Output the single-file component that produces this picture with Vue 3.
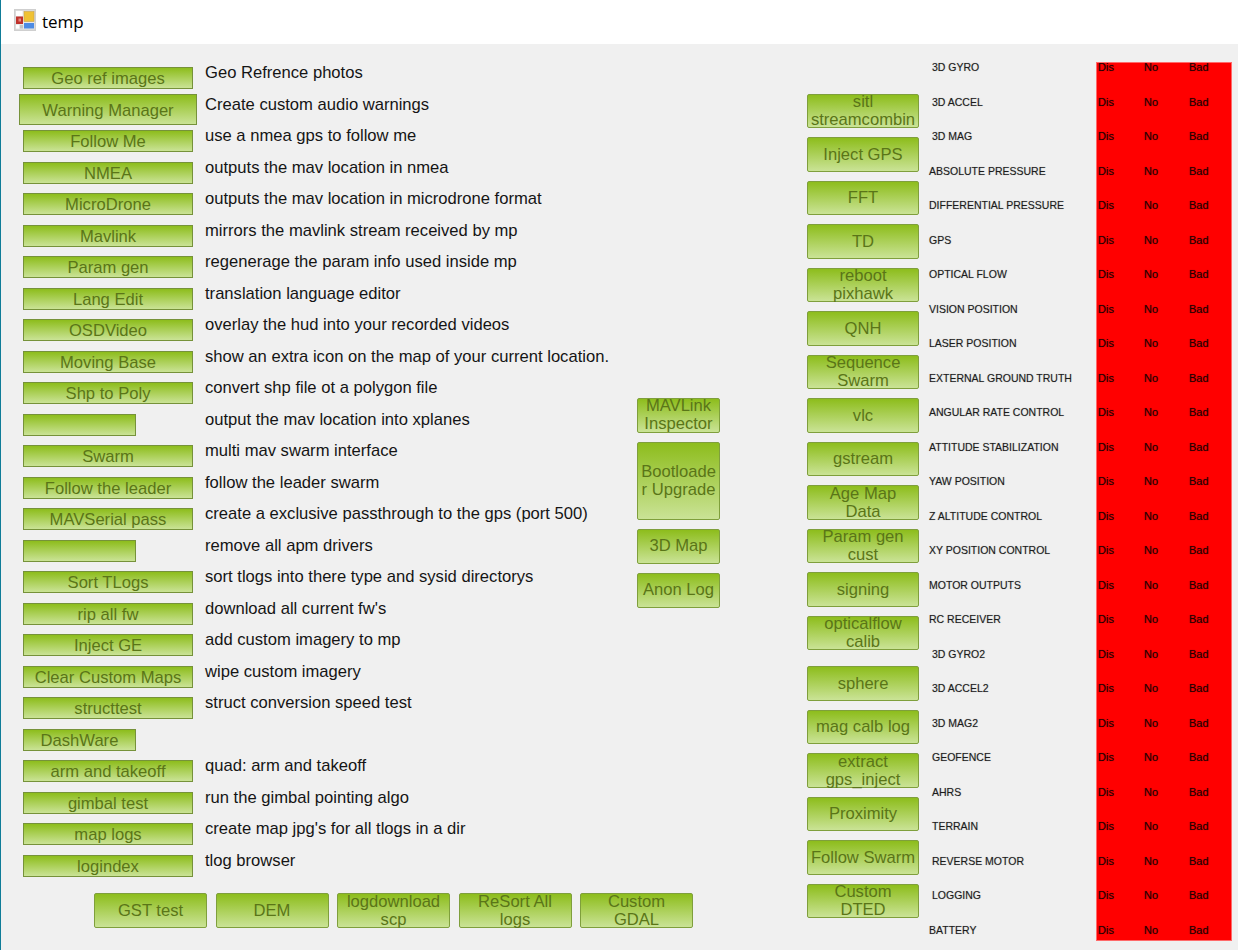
<script setup>
const tools = [
  { name: 'Geo ref images', text: 'Geo Refrence photos' },
  { name: 'Warning Manager', text: 'Create custom audio warnings', big: true },
  { name: 'Follow Me', text: 'use a nmea gps to follow me' },
  { name: 'NMEA', text: 'outputs the mav location in nmea' },
  { name: 'MicroDrone', text: 'outputs the mav location in microdrone format' },
  { name: 'Mavlink', text: 'mirrors the mavlink stream received by mp' },
  { name: 'Param gen', text: 'regenerage the param info used inside mp' },
  { name: 'Lang Edit', text: 'translation language editor' },
  { name: 'OSDVideo', text: 'overlay the hud into your recorded videos' },
  { name: 'Moving Base', text: 'show an extra icon on the map of your current location.' },
  { name: 'Shp to Poly', text: 'convert shp file ot a polygon file' },
  { name: '', text: 'output the mav location into xplanes', small: true },
  { name: 'Swarm', text: 'multi mav swarm interface' },
  { name: 'Follow the leader', text: 'follow the leader swarm' },
  { name: 'MAVSerial pass', text: 'create a exclusive passthrough to the gps (port 500)' },
  { name: '', text: 'remove all apm drivers', small: true },
  { name: 'Sort TLogs', text: 'sort tlogs into there type and sysid directorys' },
  { name: 'rip all fw', text: "download all current fw's" },
  { name: 'Inject GE', text: 'add custom imagery to mp' },
  { name: 'Clear Custom Maps', text: 'wipe custom imagery' },
  { name: 'structtest', text: 'struct conversion speed test' },
  { name: 'DashWare', text: '', small: true },
  { name: 'arm and takeoff', text: 'quad: arm and takeoff' },
  { name: 'gimbal test', text: 'run the gimbal pointing algo' },
  { name: 'map logs', text: "create map jpg's for all tlogs in a dir" },
  { name: 'logindex', text: 'tlog browser' }
]

const bottomButtons = ['GST test', 'DEM', 'logdownload\nscp', 'ReSort All\nlogs', 'Custom\nGDAL']

const middleButtons = [
  { name: 'MAVLink\nInspector' },
  { name: 'Bootloade\nr Upgrade', tall: true },
  { name: '3D Map' },
  { name: 'Anon Log' }
]

const rightButtons = [
  'sitl\nstreamcombin', 'Inject GPS', 'FFT', 'TD', 'reboot\npixhawk', 'QNH', 'Sequence\nSwarm',
  'vlc', 'gstream', 'Age Map\nData', 'Param gen\ncust', 'signing', 'opticalflow\ncalib',
  'sphere', 'mag calb log', 'extract\ngps_inject', 'Proximity', 'Follow Swarm', 'Custom\nDTED'
]

const sensors = [
  { name: '3D GYRO', inset: true },
  { name: '3D ACCEL', inset: true },
  { name: '3D MAG', inset: true },
  { name: 'ABSOLUTE PRESSURE' },
  { name: 'DIFFERENTIAL PRESSURE' },
  { name: 'GPS' },
  { name: 'OPTICAL FLOW' },
  { name: 'VISION POSITION' },
  { name: 'LASER POSITION' },
  { name: 'EXTERNAL GROUND TRUTH' },
  { name: 'ANGULAR RATE CONTROL' },
  { name: 'ATTITUDE STABILIZATION' },
  { name: 'YAW POSITION' },
  { name: 'Z ALTITUDE CONTROL' },
  { name: 'XY POSITION CONTROL' },
  { name: 'MOTOR OUTPUTS' },
  { name: 'RC RECEIVER' },
  { name: '3D GYRO2', inset: true },
  { name: '3D ACCEL2', inset: true },
  { name: '3D MAG2', inset: true },
  { name: 'GEOFENCE', inset: true },
  { name: 'AHRS', inset: true },
  { name: 'TERRAIN', inset: true },
  { name: 'REVERSE MOTOR', inset: true },
  { name: 'LOGGING', inset: true },
  { name: 'BATTERY' }
]
</script>

<template>
  <div class="window">
    <header class="titlebar">
      <svg class="app-icon" width="22" height="22" viewBox="0 0 22 22">
        <rect x="0" y="0" width="22" height="22" fill="#cfcfcf" />
        <rect x="1.5" y="1.5" width="19" height="19" fill="#e8e8e8" />
        <rect x="2" y="2" width="6.5" height="5" fill="#fff" />
        <rect x="2" y="7.5" width="7" height="7.5" fill="#c0322c" />
        <rect x="4.5" y="9.5" width="2.5" height="3" fill="#e58a80" />
        <rect x="10" y="2.5" width="10" height="10" fill="#f0c234" stroke="#c9a24a" stroke-width="0.6" />
        <rect x="10" y="14" width="10" height="5.5" fill="#4d8be4" />
        <rect x="2" y="16" width="3" height="3.5" fill="#fff" />
        <rect x="6" y="16" width="3" height="3.5" fill="#c4c4c4" />
      </svg>
      <span class="title">temp</span>
    </header>

    <main class="content">
      <section class="tools">
        <div v-for="(tool, i) in tools" :key="i" class="tool-row">
          <div class="tool-cell">
            <button
              type="button"
              class="btn flat"
              :class="{ big: tool.big, small: tool.small }"
            >{{ tool.name }}</button>
          </div>
          <span class="tool-text">{{ tool.text }}</span>
        </div>
        <div class="bottom-row">
          <button v-for="b in bottomButtons" :key="b" type="button" class="btn">{{ b }}</button>
        </div>
      </section>

      <section class="middle">
        <button
          v-for="b in middleButtons"
          :key="b.name"
          type="button"
          class="btn"
          :class="{ tall: b.tall }"
        >{{ b.name }}</button>
      </section>

      <section class="right-buttons">
        <button
          v-for="b in rightButtons"
          :key="b"
          type="button"
          class="btn"
          :class="{ 'after-gap': b === 'sphere' }"
        >{{ b }}</button>
      </section>

      <section class="sensors">
        <div class="sensor-names">
          <div
            v-for="s in sensors"
            :key="s.name"
            class="sensor-name"
            :class="{ inset: s.inset }"
          >{{ s.name }}</div>
        </div>
        <div class="sensor-status">
          <div v-for="s in sensors" :key="s.name" class="status-row">
            <span>Dis</span>
            <span>No</span>
            <span>Bad</span>
          </div>
        </div>
      </section>
    </main>
  </div>
</template>

<style scoped>
.window {
  width: 1238px;
  height: 950px;
  box-sizing: border-box;
  border-left: 1px solid #0f7c98;
  background: #f0f0f0;
  font-family: "Liberation Sans", Arial, sans-serif;
  overflow: hidden;
}

.titlebar {
  height: 44px;
  background: #fff;
  display: flex;
  align-items: center;
  gap: 6px;
  padding-left: 13px;
}
.app-icon {
  flex: none;
  margin-top: -4px;
}
.title {
  font-family: "Open Sans", sans-serif;
  font-size: 17px;
  color: #000;
  margin-top: -1px;
}

.content {
  display: flex;
  align-items: flex-start;
}

.btn {
  display: flex;
  align-items: center;
  justify-content: center;
  box-sizing: border-box;
  padding: 0;
  border: 1px solid #7f9f3c;
  border-radius: 2px;
  background: linear-gradient(#8dbd1c, #cae396);
  color: #5a7518;
  font-family: inherit;
  font-size: 16.6px;
  line-height: 18px;
  text-align: center;
  white-space: pre-line;
  flex: none;
}
.btn.flat {
  width: 170px;
  height: 22px;
  padding-top: 2px;
  border-color: #76923a;
  border-radius: 0;
}
.btn.flat.big {
  width: 178px;
  height: 31px;
  margin: 0 -4px;
}
.btn.flat.small {
  width: 113px;
}

.tools {
  width: 614px;
  flex: none;
  margin-left: 22px;
  padding-top: 18.25px;
}
.tool-row {
  height: 31.5px;
  display: flex;
  align-items: center;
}
.tool-cell {
  width: 182px;
  flex: none;
}
.tool-text {
  margin-bottom: 10px;
  font-size: 16.6px;
  color: #151515;
  white-space: nowrap;
}
.bottom-row {
  display: flex;
  gap: 8.5px;
  margin-top: 11.75px;
  padding-left: 71px;
}
.bottom-row .btn {
  width: 113px;
  height: 35px;
}

.middle {
  width: 83px;
  flex: none;
  display: flex;
  flex-direction: column;
  gap: 9.5px;
  padding-top: 354px;
}
.middle .btn {
  width: 83px;
  height: 34.5px;
}
.middle .btn.tall {
  height: 77.5px;
}

.right-buttons {
  width: 112px;
  flex: none;
  margin-left: 87px;
  display: flex;
  flex-direction: column;
  gap: 9px;
  padding-top: 49.5px;
}
.right-buttons .btn {
  width: 112px;
  height: 34.5px;
  padding-top: 1px;
}
.right-buttons .btn.after-gap {
  margin-top: 7px;
}

.sensors {
  display: flex;
  margin-left: 10px;
  padding-top: 18px;
}
.sensor-names {
  width: 167px;
  flex: none;
}
.sensor-name {
  height: 34.52px;
  font-size: 10.5px;
  line-height: 10px;
  color: #1c1c1c;
  white-space: nowrap;
  text-shadow: 0 0 1px rgba(0, 0, 0, 0.35);
}
.sensor-name.inset {
  padding-left: 3px;
}
.sensor-status {
  width: 136px;
  height: 879px;
  box-sizing: border-box;
  flex: none;
  overflow: hidden;
  background: #f00;
  border: 1px solid #ff6a6a;
}
.status-row {
  height: 34.52px;
  display: grid;
  grid-template-columns: 46px 45px 1fr;
  padding-left: 1px;
  font-size: 11px;
  line-height: 9px;
  color: #200;
  text-shadow: 0 0 1px rgba(60, 0, 0, 0.6);
}
</style>

<style>
html, body {
  margin: 0;
  overflow: hidden;
}
</style>
